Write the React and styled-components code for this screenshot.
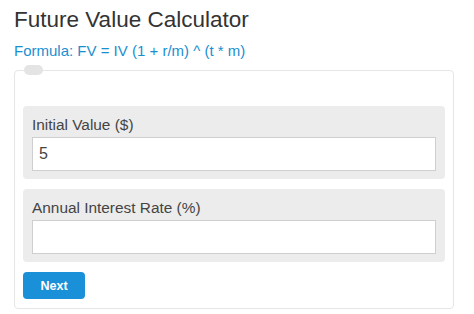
import React from "react";
import styled, { createGlobalStyle } from "styled-components";

const Global = createGlobalStyle`
  html, body { margin: 0; padding: 0; background: #fff; }
  body { font-family: "Liberation Sans", Arial, sans-serif; color: #333; }
`;

const Page = styled.div`
  padding: 7px 20px 0 14px;
  width: 474px;
  box-sizing: border-box;
`;

const Title = styled.h1`
  margin: 0;
  font-size: 22.5px;
  font-weight: 400;
  line-height: 26px;
  color: #333;
`;

const Formula = styled.div`
  margin-top: 9px;
  font-size: 15px;
  line-height: 18px;
  color: #1a8fd0;
`;

const Card = styled.div`
  position: relative;
  margin-top: 10px;
  border: 1px solid #e6e6e6;
  border-radius: 4px;
  padding: 35px 8px 9px 8px;
  display: flex;
  flex-direction: column;
  gap: 10px;
`;

const Pill = styled.div`
  position: absolute;
  left: 9px;
  top: -6px;
  width: 19px;
  height: 10px;
  border-radius: 5px;
  background: #e4e4e4;
`;

const Group = styled.div`
  background: #ececec;
  border-radius: 4px;
  padding: 10px 9px 8px 9px;
  display: flex;
  flex-direction: column;
  gap: 3px;
`;

const Label = styled.label`
  font-size: 15.4px;
  line-height: 18px;
  color: #444;
`;

const Input = styled.input`
  box-sizing: border-box;
  width: 100%;
  height: 34px;
  border: 1px solid #cfcfcf;
  background: #fff;
  padding: 0 6px;
  font-family: "Liberation Sans", Arial, sans-serif;
  font-size: 16px;
  color: #444;
  outline: none;
`;

const Button = styled.button`
  align-self: flex-start;
  margin-top: 0;
  width: 62px;
  height: 27px;
  border: none;
  border-radius: 4px;
  background: #1a90d8;
  color: #fff;
  font-family: "Liberation Sans", Arial, sans-serif;
  font-weight: 700;
  font-size: 12.5px;
`;

export default function App() {
  return (
    <>
      <Global />
      <Page>
        <Title>Future Value Calculator</Title>
        <Formula>Formula: FV = IV (1 + r/m) ^ (t * m)</Formula>
        <Card>
          <Pill />
          <Group>
            <Label>Initial Value ($)</Label>
            <Input defaultValue="5" />
          </Group>
          <Group>
            <Label>Annual Interest Rate (%)</Label>
            <Input defaultValue="" />
          </Group>
          <Button>Next</Button>
        </Card>
      </Page>
    </>
  );
}
